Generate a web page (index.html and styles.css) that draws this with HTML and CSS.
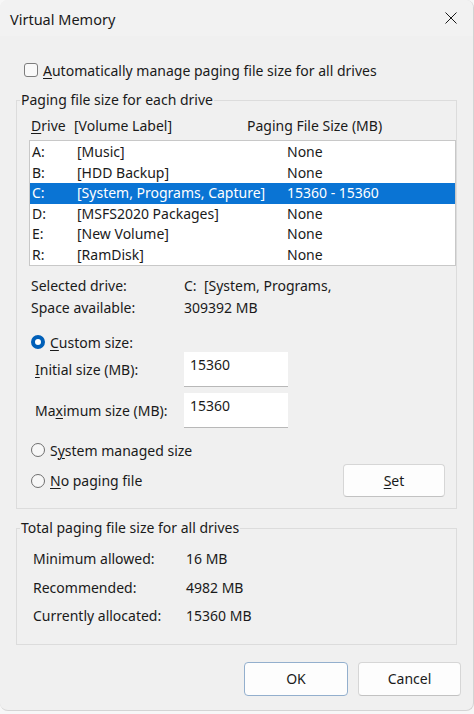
FILE: index.html
```html
<!DOCTYPE html>
<html lang="en">
<head>
<meta charset="utf-8">
<title>Virtual Memory</title>
<link rel="stylesheet" href="styles.css">
</head>
<body>
<div class="window">
  <div class="titlebar">
    <span class="title">Virtual Memory</span>
    <svg class="close" width="12" height="12" viewBox="0 0 12 12" aria-label="Close">
      <path d="M0.5 0.5 L11.5 11.5 M11.5 0.5 L0.5 11.5" stroke="#1a1a1a" stroke-width="1" fill="none"/>
    </svg>
  </div>
  <div class="content">
    <div class="check-row">
      <span class="checkbox"></span>
      <span><u>A</u>utomatically manage paging file size for all drives</span>
    </div>

    <fieldset class="group">
      <legend>Paging file size for each drive</legend>
      <div class="group-body drives-body">
        <div class="list-header">
          <span><u>D</u>rive</span><span>[Volume Label]</span><span>Paging File Size (MB)</span>
        </div>
        <div class="listbox">
          <div class="list-row"><span>A:</span><span>[Music]</span><span>None</span></div>
          <div class="list-row"><span>B:</span><span>[HDD Backup]</span><span>None</span></div>
          <div class="list-row selected"><span>C:</span><span>[System, Programs, Capture]</span><span>15360 - 15360</span></div>
          <div class="list-row"><span>D:</span><span>[MSFS2020 Packages]</span><span>None</span></div>
          <div class="list-row"><span>E:</span><span>[New Volume]</span><span>None</span></div>
          <div class="list-row"><span>R:</span><span>[RamDisk]</span><span>None</span></div>
        </div>
        <div class="info">
          <div class="info-row"><span>Selected drive:</span><span class="pre">C:  [System, Programs,</span></div>
          <div class="info-row"><span>Space available:</span><span>309392 MB</span></div>
        </div>
        <div class="radio-row custom-row">
          <span class="radio checked"></span><span><u>C</u>ustom size:</span>
        </div>
        <div class="field-row">
          <span class="field-label"><u>I</u>nitial size (MB):</span>
          <div class="textbox">15360</div>
        </div>
        <div class="field-row second">
          <span class="field-label">Ma<u>x</u>imum size (MB):</span>
          <div class="textbox">15360</div>
        </div>
        <div class="radio-row system-row">
          <span class="radio"></span><span>S<u>y</u>stem managed size</span>
        </div>
        <div class="radio-row nopage-row">
          <span class="radio"></span><span><u>N</u>o paging file</span>
          <button class="btn set-btn"><u>S</u>et</button>
        </div>
      </div>
    </fieldset>

    <fieldset class="group total">
      <legend>Total paging file size for all drives</legend>
      <div class="group-body total-body">
        <div class="total-row"><span>Minimum allowed:</span><span>16 MB</span></div>
        <div class="total-row"><span>Recommended:</span><span>4982 MB</span></div>
        <div class="total-row"><span>Currently allocated:</span><span>15360 MB</span></div>
      </div>
    </fieldset>

    <div class="buttons">
      <button class="btn dlg-btn default">OK</button>
      <button class="btn dlg-btn cancel">Cancel</button>
    </div>
  </div>
</div>
</body>
</html>
```

FILE: styles.css
```css
html, body {
  margin: 0;
  padding: 0;
}
body {
  background: #f7f7f7;
  font-family: "Segoe UI", "Noto Sans", "Open Sans", sans-serif;
  font-size: 14px;
  color: #1a1a1a;
}
u {
  text-decoration-thickness: 1px;
  text-underline-offset: 2px;
}
.window {
  width: 474px;
  height: 711px;
  box-sizing: border-box;
  background: #f0f0f0;
  border-radius: 8px;
  border-right: 1px solid #d4d4d4;
  border-bottom: 1px solid #d4d4d4;
  display: flex;
  flex-direction: column;
  overflow: hidden;
}
.titlebar {
  height: 36px;
  flex: none;
  display: flex;
  align-items: center;
  justify-content: space-between;
  padding: 0 16px 0 10px;
  background: #f2f2f2;
}
.title {
  line-height: 20px;
  margin-top: 2px;
  font-size: 14.5px;
}
.close {
  display: block;
  margin-top: 0;
}
.content {
  padding: 0 16px;
  display: flex;
  flex-direction: column;
}
.check-row {
  margin-top: 24px;
  height: 20px;
  display: flex;
  align-items: center;
  gap: 5px;
  padding-left: 8px;
}
.checkbox {
  width: 12px;
  height: 12px;
  border: 1px solid #7d7d7d;
  border-radius: 3px;
  background: #f9f9f9;
  flex: none;
}
.group {
  margin: 10px 0 0;
  padding: 0;
  border: 1px solid #dcdcdc;
  min-width: 0;
}
.group legend {
  margin-left: 3px;
  padding: 0 1px;
  line-height: 20px;
}
.group-body {
  padding-left: 12px;
}
.drives-body {
  padding-top: 6px;
  padding-bottom: 11px;
}
.list-header {
  display: grid;
  grid-template-columns: 43px 173px auto;
  line-height: 20px;
  padding-left: 2px;
}
.listbox {
  margin-top: 4px;
  background: #ffffff;
  border: 1px solid #c8c8c8;
  padding: 1px 0 0;
}
.list-row {
  display: grid;
  grid-template-columns: 45px 210px auto;
  height: 20.5px;
  line-height: 20.5px;
  padding-left: 2px;
  white-space: nowrap;
}
.list-row.selected {
  background: #0a74d4;
  color: #ffffff;
}
.info {
  margin-top: 9px;
  padding-left: 2px;
}
.info-row {
  display: grid;
  grid-template-columns: 153px auto;
  line-height: 22px;
}
.pre {
  white-space: pre;
}
.radio-row {
  display: flex;
  align-items: center;
  gap: 5px;
  padding-left: 2px;
  height: 20px;
}
.custom-row {
  margin-top: 13px;
}
.system-row {
  margin-top: 12px;
}
.nopage-row {
  margin-top: 4px;
  height: 33px;
}
.radio {
  width: 12px;
  height: 12px;
  border: 1px solid #6f6f6f;
  border-radius: 50%;
  background: #f7f7f7;
  flex: none;
}
.radio.checked {
  width: 6px;
  height: 6px;
  border: 4px solid #005fb8;
  background: #ffffff;
}
.field-row {
  display: flex;
  align-items: center;
  height: 35px;
}
.field-row.second {
  margin-top: 6px;
}
.field-label {
  width: 149px;
  padding-left: 6px;
  flex: none;
}
.textbox {
  width: 98px;
  height: 31px;
  padding: 3px 0 0 6px;
  line-height: 20px;
  background: #ffffff;
  border-bottom: 1px solid #b8b8b8;
}
.btn {
  font: inherit;
  color: #1a1a1a;
  background: #fdfdfd;
  border: 1px solid #d6d6d6;
  border-bottom-color: #c2c2c2;
  border-radius: 4px;
  padding: 0;
  line-height: 20px;
}
.set-btn {
  margin-left: auto;
  margin-right: 11px;
  width: 102px;
  height: 33px;
}
.group.total {
  margin-top: 9px;
}
.total-body {
  padding-top: 7px;
  padding-bottom: 13px;
}
.total-row {
  display: grid;
  grid-template-columns: 153px auto;
  line-height: 28.5px;
  padding-left: 4px;
}
.buttons {
  margin-top: 17px;
  margin-right: -4px;
  display: flex;
  justify-content: flex-end;
  gap: 10px;
}
.dlg-btn {
  height: 34px;
  width: 103px;
}
.dlg-btn.default {
  width: 104px;
  border-color: #93afcd;
}
```
